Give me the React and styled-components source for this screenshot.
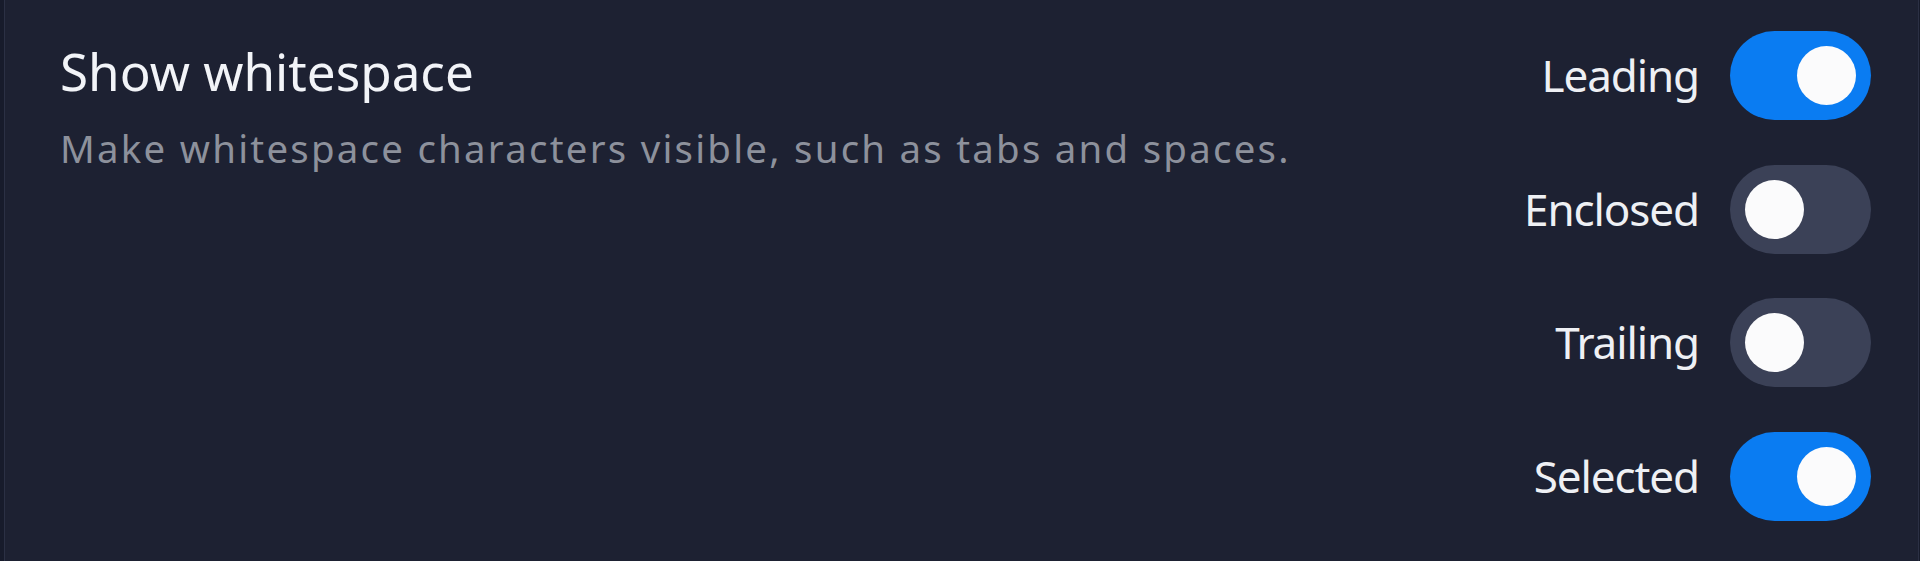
import React, { useState } from 'react';
import styled, { createGlobalStyle } from 'styled-components';

const GlobalStyle = createGlobalStyle`
  html, body {
    margin: 0;
    padding: 0;
    background: #171b2b;
  }
  body {
    font-family: "Noto Sans", "Open Sans", sans-serif;
  }
`;

const Panel = styled.div`
  margin-left: 4px;
  margin-right: 1px;
  height: 561px;
  box-sizing: border-box;
  background: #1d2132;
  border-left: 1px solid #2b3044;
  border-right: 1px solid #2b3044;
  padding: 31px 47px 0 55px;
  display: flex;
  justify-content: space-between;
  align-items: flex-start;
`;

const Info = styled.div`
  display: flex;
  flex-direction: column;
  gap: 17px;
  padding-top: 8px;
`;

const Title = styled.div`
  font-size: 51.2px;
  line-height: 64px;
  color: #f2f4f8;
`;

const Description = styled.div`
  font-size: 38.4px;
  line-height: 56px;
  letter-spacing: 2.25px;
  color: #8d919c;
`;

const Options = styled.div`
  display: flex;
  flex-direction: column;
  gap: 44.7px;
`;

const OptionRow = styled.label`
  display: flex;
  align-items: center;
  justify-content: flex-end;
  gap: 31px;
  cursor: pointer;
`;

const OptionLabel = styled.span`
  font-size: 44px;
  line-height: 55px;
  letter-spacing: -1.1px;
  color: #eef0f4;
`;

const Track = styled.button`
  width: 141px;
  height: 89px;
  border: none;
  border-radius: 45px;
  padding: 0 15px;
  display: flex;
  align-items: center;
  justify-content: ${(p) => (p.$on ? 'flex-end' : 'flex-start')};
  background: ${(p) => (p.$on ? '#0a7cf2' : '#3b4157')};
  cursor: pointer;
  flex-shrink: 0;
`;

const Knob = styled.span`
  width: 59px;
  height: 59px;
  border-radius: 50%;
  background: #fbfbfc;
`;

const initial = [
  { key: 'leading', label: 'Leading', on: true },
  { key: 'enclosed', label: 'Enclosed', on: false },
  { key: 'trailing', label: 'Trailing', on: false },
  { key: 'selected', label: 'Selected', on: true },
];

const App = () => {
  const [options, setOptions] = useState(initial);

  const toggle = (key) => {
    setOptions((prev) =>
      prev.map((o) => (o.key === key ? { ...o, on: !o.on } : o))
    );
  };

  return (
    <>
      <GlobalStyle />
      <Panel>
        <Info>
          <Title>Show whitespace</Title>
          <Description>
            Make whitespace characters visible, such as tabs and spaces.
          </Description>
        </Info>
        <Options>
          {options.map((o) => (
            <OptionRow key={o.key}>
              <OptionLabel>{o.label}</OptionLabel>
              <Track
                type='button'
                role='switch'
                aria-checked={o.on}
                $on={o.on}
                onClick={() => toggle(o.key)}
              >
                <Knob />
              </Track>
            </OptionRow>
          ))}
        </Options>
      </Panel>
    </>
  );
};

export default App;
